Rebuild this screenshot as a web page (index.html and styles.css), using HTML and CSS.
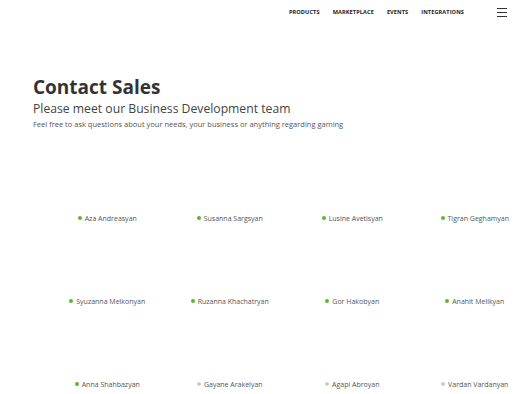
FILE: index.html
```html
<!DOCTYPE html>
<html lang="en">
<head>
    <meta charset="UTF-8">
    <meta name="viewport" content="width=device-width, initial-scale=1.0">
    <title>Contact Sales</title>
    <link rel="stylesheet" href="styles.css">
</head>
<body>
    <div class="page">
        <!-- Top navigation -->
        <header class="topbar">
            <nav class="menu">
                <a href="#">Products</a>
                <a href="#">Marketplace</a>
                <a href="#">Events</a>
                <a href="#">Integrations</a>
            </nav>
            <button class="burger" aria-label="Menu">
                <span></span><span></span><span></span>
            </button>
        </header>

        <section class="intro">
            <h1>Contact Sales</h1>
            <h2>Please meet our Business Development team</h2>
            <p>Feel free to ask questions about your needs, your business or anything regarding gaming</p>
        </section>

        <!-- Team grid -->
        <section class="team">
            <div class="member"><span class="dot on"></span>Aza Andreasyan</div>
            <div class="member"><span class="dot on"></span>Susanna Sargsyan</div>
            <div class="member"><span class="dot on"></span>Lusine Avetisyan</div>
            <div class="member"><span class="dot on"></span>Tigran Geghamyan</div>
            <div class="member"><span class="dot on"></span>Syuzanna Melkonyan</div>
            <div class="member"><span class="dot on"></span>Ruzanna Khachatryan</div>
            <div class="member"><span class="dot on"></span>Gor Hakobyan</div>
            <div class="member"><span class="dot on"></span>Anahit Melikyan</div>
            <div class="member"><span class="dot on"></span>Anna Shahbazyan</div>
            <div class="member"><span class="dot"></span>Gayane Arakelyan</div>
            <div class="member"><span class="dot"></span>Agapi Abroyan</div>
            <div class="member"><span class="dot"></span>Vardan Vardanyan</div>
        </section>
    </div>
</body>
</html>
```

FILE: styles.css
```css
/* General */
body {
    margin: 0;
    font-family: 'Open Sans', sans-serif;
    background: #fff;
    color: #333;
}

.page {
    width: 524px;
    height: 394px;
    overflow: hidden;
}

/* Top bar */
.topbar {
    display: flex;
    align-items: center;
    justify-content: flex-end;
    height: 24px;
    padding-right: 17px;
}

.menu {
    display: flex;
    gap: 13px;
    margin-right: 33px;
}

.menu a {
    font-size: 5.6px;
    font-weight: 700;
    text-transform: uppercase;
    color: #222;
    text-decoration: none;
    letter-spacing: 0.1px;
}

.burger {
    display: flex;
    flex-direction: column;
    gap: 3px;
    padding: 0;
    border: none;
    background: none;
    width: 10px;
}

.burger span {
    display: block;
    height: 1px;
    background: #333;
}

/* Intro */
.intro {
    padding: 51px 33px 0;
}

.intro h1 {
    margin: 0;
    font-size: 19px;
    font-weight: 700;
    line-height: 25px;
    color: #333;
}

.intro h2 {
    margin: 0;
    font-size: 12.2px;
    font-weight: 400;
    line-height: 17px;
    color: #444;
}

.intro p {
    margin: 2px 0 0;
    font-size: 7.5px;
    line-height: 10px;
    color: #555;
}

/* Team */
.team {
    display: grid;
    grid-template-columns: repeat(4, 122.5px);
    grid-auto-rows: 83px;
    margin: 15px 0 0 46px;
}

.member {
    display: flex;
    align-items: flex-end;
    justify-content: center;
    gap: 3px;
    padding-bottom: 4px;
    font-size: 7px;
    color: #555;
    white-space: nowrap;
}

.dot {
    width: 4px;
    height: 4px;
    border-radius: 50%;
    background: #ccc;
    margin-bottom: 3px;
}

.dot.on {
    background: #5cb82e;
}
```
